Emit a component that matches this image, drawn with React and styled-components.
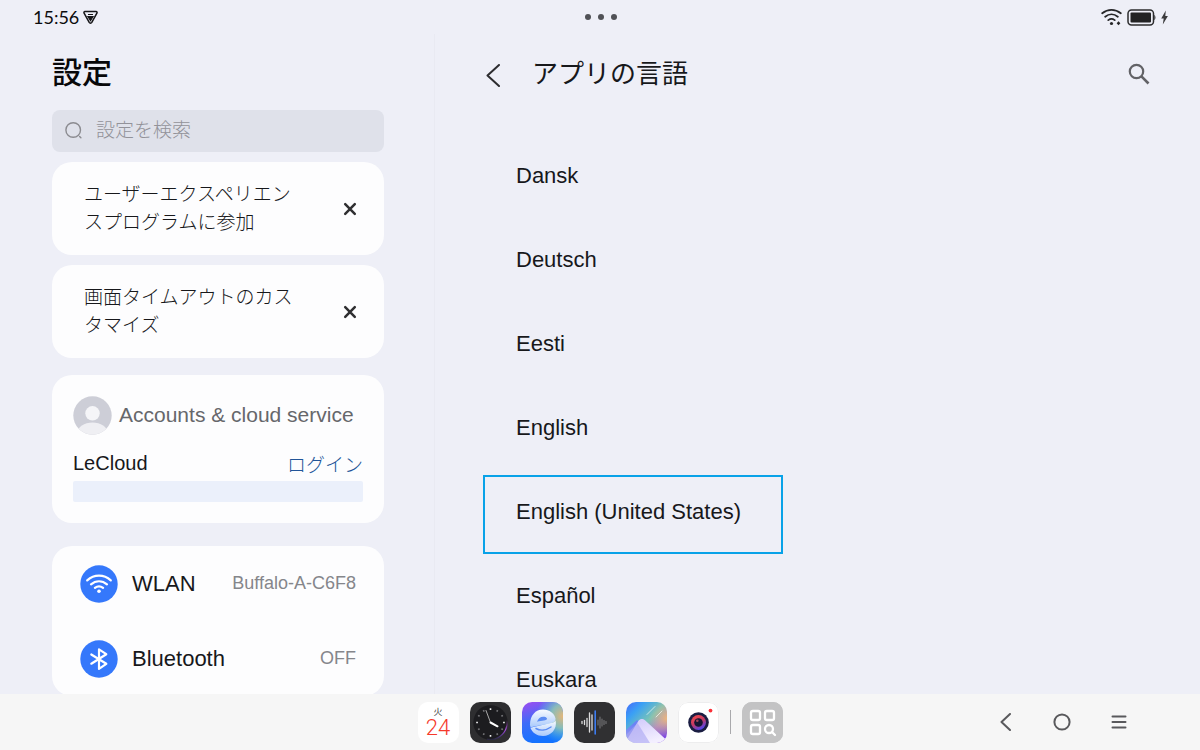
import React from "react";
import styled, { createGlobalStyle } from "styled-components";

const GlobalStyle = createGlobalStyle`
  *, *::before, *::after { box-sizing: border-box; }
  body {
    margin: 0;
    background: #eeeff7;
    color: #17181b;
    font-family: "Liberation Sans", "Noto Sans CJK JP", sans-serif;
  }
  button { font: inherit; color: inherit; background: none; border: 0; padding: 0; cursor: pointer; }
  h1, h2, p, ul { margin: 0; padding: 0; font-weight: 400; }
  ul { list-style: none; }
  svg { display: block; }
`;

const Screen = styled.div`
  display: flex;
  flex-direction: column;
  height: 100vh;
`;

const StatusBar = styled.header`
  flex: none;
  display: grid;
  grid-template-columns: 1fr auto 1fr;
  align-items: center;
  height: 34px;
  padding: 0 32px 0 33px;
`;

const Clock = styled.div`
  display: flex;
  align-items: center;
  gap: 4px;
  font-family: Lato, sans-serif;
  font-size: 18px;
  color: #0c0c0e;
`;

const Indicators = styled.div`
  display: flex;
  justify-content: flex-end;
  align-items: center;
  gap: 5px;
`;

const Panes = styled.main`
  flex: 1;
  min-height: 0;
  display: grid;
  grid-template-columns: 29fr 51fr;
  overflow: hidden;
`;

const Sidebar = styled.section`
  min-height: 0;
  overflow: hidden;
  padding: 14px 50px 0 52px;
  border-right: 1px solid #e9eaf2;
`;

const Title = styled.h1`
  height: 50px;
  font-size: 30px;
  line-height: 50px;
  font-weight: 500;
  color: #08080a;
`;

const SearchBox = styled.label`
  display: flex;
  align-items: center;
  gap: 12px;
  height: 42px;
  margin: 12px 0 10px;
  padding: 0 12px;
  border-radius: 8px;
  background: #dfe1ea;
`;

const SearchInput = styled.input`
  flex: 1;
  min-width: 0;
  border: 0;
  outline: 0;
  padding: 0;
  background: none;
  font: inherit;
  font-size: 19px;
  line-height: 28px;
  font-weight: 300;
  &::placeholder { color: #929299; opacity: 1; }
`;

const Card = styled.div`
  background: #fdfdfe;
  border-radius: 20px;
`;

const TipCard = styled(Card)`
  display: flex;
  align-items: center;
  justify-content: space-between;
  height: 93px;
  margin-bottom: 10px;
  padding: 0 24px 0 32px;
`;

const TipText = styled.p`
  width: 212px;
  font-size: 19px;
  line-height: 28px;
  font-weight: 300;
  line-break: anywhere;
  word-break: break-all;
`;

const IconButton = styled.button`
  display: grid;
  place-items: center;
  width: ${(p) => p.$size || 20}px;
  height: ${(p) => p.$size || 20}px;
`;

const AccountCard = styled(Card)`
  height: 148px;
  margin: 17px 0 23px;
  padding: 20px 21px;
`;

const AccountHead = styled.div`
  display: flex;
  align-items: center;
  gap: 7px;
  height: 40px;
  font-size: 21px;
  color: #66676b;
  white-space: nowrap;
`;

const CloudRow = styled.div`
  display: flex;
  align-items: center;
  justify-content: space-between;
  height: 28px;
  margin: 14px 0 4px;
  font-size: 20px;
`;

const LoginLink = styled.a`
  font-size: 19px;
  font-weight: 300;
  color: #225598;
  text-decoration: none;
`;

const CloudBar = styled.div`
  height: 21px;
  border-radius: 2px;
  background: #ebf0fb;
`;

const NetworkRow = styled.button`
  display: flex;
  align-items: center;
  width: 100%;
  height: 75px;
  padding: 0 28px;
  text-align: left;
`;

const NetworkName = styled.span`
  flex: 1;
  margin-left: 14px;
  font-size: 22px;
`;

const NetworkValue = styled.span`
  font-size: 18px;
  color: #85868b;
`;

const Detail = styled.section`
  min-height: 0;
  overflow: hidden;
  padding: 14px 50px 0 48px;
`;

const DetailHead = styled.div`
  display: flex;
  align-items: center;
  height: 52px;
  margin-bottom: 34px;
`;

const DetailTitle = styled.h2`
  flex: 1;
  margin-left: 29px;
  font-size: 26px;
  line-height: 52px;
`;

const LanguageItem = styled.li`
  height: 84px;
  padding-top: 5px;
`;

const LanguageButton = styled.button`
  width: 300px;
  height: 79px;
  padding: 0 31px 5px;
  border: 2px solid ${(p) => (p.$marked ? "#08a2e8" : "transparent")};
  font-size: 22px;
  text-align: left;
  white-space: nowrap;
`;

const Taskbar = styled.footer`
  flex: none;
  display: grid;
  grid-template-columns: 1fr auto 1fr;
  align-items: center;
  height: 56px;
  background: #f6f6f6;
`;

const Dock = styled.div`
  grid-column: 2;
  display: flex;
  align-items: center;
  gap: 11px;
`;

const AppButton = styled.button`
  width: 41px;
  height: 41px;
  border-radius: 10px;
  overflow: hidden;
  background: ${(p) => p.$bg || "#fff"};
`;

const CalendarButton = styled(AppButton)`
  display: flex;
  flex-direction: column;
  align-items: center;
  justify-content: center;
`;

const Weekday = styled.span`
  font-size: 9px;
  line-height: 12px;
  color: #444;
`;

const DayNumber = styled.span`
  font-family: Roboto, sans-serif;
  font-size: 22px;
  line-height: 20px;
  font-weight: 300;
  color: #f5392b;
`;

const DockDivider = styled.span`
  width: 1px;
  height: 24px;
  background: #a9a9ac;
`;

const NavKeys = styled.nav`
  display: flex;
  justify-content: flex-end;
  gap: 17px;
  padding-right: 61px;
`;

const ShieldIcon = () => (
  <svg width="15" height="15" viewBox="0 0 15 15" fill="none" aria-hidden="true">
    <path d="M2 1.5h11c1 0 1.3.8.9 1.7L8.8 12.4c-.6 1-2 1-2.6 0L1.1 3.2C.7 2.300 1 1.500 2 1.500Z" stroke="#161618" strokeWidth="1.500" />
    <path d="M5 4.500h5M5 6.500h5L7.500 10.500Z" stroke="#161618" strokeWidth="1.200" fill="#161618" />
  </svg>
);

const MoreDots = () => (
  <svg width="34" height="8" viewBox="0 0 34 8" fill="#505156" aria-hidden="true">
    <circle cx="4" cy="4" r="3" />
    <circle cx="17" cy="4" r="3" />
    <circle cx="30" cy="4" r="3" />
  </svg>
);

const SignalIcon = () => (
  <svg width="21" height="18" viewBox="0 0 21 18" fill="none" stroke="#262628" strokeWidth="1.800" strokeLinecap="round" aria-hidden="true">
    <path d="M1.200 5.300C6.800.8 14.200.8 19.800 5.300M4.200 8.700c3.800-3.200 8.800-3.200 12.600 0M7.300 12.100c2-1.500 4.400-1.500 6.400 0" />
    <circle cx="10.500" cy="15.500" r="1.600" fill="#262628" stroke="none" />
    <path d="M17.500 13.200l1.900 2-1.900 2-1.900-2Z" fill="#262628" stroke="none" />
  </svg>
);

const BatteryIcon = () => (
  <svg width="29" height="17" viewBox="0 0 29 17" fill="none" aria-hidden="true">
    <rect x="1" y="1" width="25.500" height="15" rx="3.500" stroke="#2c2c2e" strokeWidth="1.500" />
    <rect x="3.500" y="3.500" width="20.500" height="10" rx="1" fill="#232324" />
    <path d="M27.300 6c1.500.6 1.500 4.400 0 5Z" fill="#2c2c2e" />
  </svg>
);

const BoltIcon = () => (
  <svg width="7" height="15" viewBox="0 0 7 15" aria-hidden="true">
    <path d="M4.800.5.200 8.400h2.500l-.9 6.100L6.900 6H4.300Z" fill="#3a3a3c" />
  </svg>
);

const FieldSearchIcon = () => (
  <svg width="20" height="20" viewBox="0 0 20 20" fill="none" stroke="#8b8b90" strokeWidth="1.400" strokeLinecap="round" aria-hidden="true">
    <circle cx="9.200" cy="9" r="7.300" />
    <path d="m15.600 15.400 1.300 1.300" />
  </svg>
);

const CloseIcon = () => (
  <svg width="14" height="14" viewBox="0 0 14 14" fill="none" stroke="#2f2f31" strokeWidth="2.500" strokeLinecap="round" aria-hidden="true">
    <path d="m2.200 2.200 9.600 9.600M11.800 2.200 2.200 11.800" />
  </svg>
);

const AvatarIcon = () => (
  <svg width="39" height="39" viewBox="0 0 39 39" aria-hidden="true">
    <clipPath id="avatarClip"><circle cx="19.500" cy="19.500" r="19.200" /></clipPath>
    <g clipPath="url(#avatarClip)">
      <rect width="39" height="39" fill="#cdced7" />
      <circle cx="19.500" cy="17.300" r="7.200" fill="#f5f5f8" />
      <ellipse cx="19.500" cy="37" rx="15" ry="10.500" fill="#efeff3" />
    </g>
  </svg>
);

const WlanIcon = () => (
  <svg width="38" height="38" viewBox="0 0 38 38" fill="none" stroke="#fff" strokeWidth="2.200" strokeLinecap="round" aria-hidden="true">
    <circle cx="19" cy="19" r="18.700" fill="#3578fb" stroke="none" />
    <path d="M7.200 15.400c7-6.300 16.600-6.300 23.600 0M11 19.400c4.800-4.200 11.200-4.200 16 0M14.900 22.900c2.500-2 5.700-2 8.200 0" />
    <circle cx="19" cy="26.300" r="1.800" fill="#fff" stroke="none" />
  </svg>
);

const BluetoothIcon = () => (
  <svg width="38" height="38" viewBox="0 0 38 38" fill="none" stroke="#fff" strokeWidth="2.200" strokeLinecap="round" strokeLinejoin="round" aria-hidden="true">
    <circle cx="19" cy="19" r="18.700" fill="#3578fb" stroke="none" />
    <path d="m11.300 14.500 15 9.300-7.300 5V9.400l7.300 4.800-15 9.500" />
  </svg>
);

const BackIcon = ({ height, width, weight, color }) => (
  <svg width={width} height={height} viewBox={`0 0 ${width} ${height}`} fill="none" stroke={color} strokeWidth={weight} strokeLinecap="round" strokeLinejoin="round" aria-hidden="true">
    <path d={`M${width - 1} 1 1.500 ${height / 2}l${width - 2.5} ${height / 2 - 1}`} />
  </svg>
);

const HeaderSearchIcon = () => (
  <svg width="22" height="22" viewBox="0 0 22 22" fill="none" stroke="#626266" strokeWidth="2.200" aria-hidden="true">
    <circle cx="8.500" cy="8.500" r="6.700" />
    <path d="m13.200 13.200 7.300 7.300" strokeWidth="2.600" />
  </svg>
);

const ClockAppIcon = () => (
  <svg width="41" height="41" viewBox="0 0 41 41" fill="none" aria-hidden="true">
    <defs>
      <linearGradient id="clockRing" x1="0.700" y1="0" x2="0.300" y2="1">
        <stop offset="0.200" stopColor="#b64cd0" stopOpacity="0" />
        <stop offset="0.500" stopColor="#a54cd8" />
        <stop offset="1" stopColor="#4d45b5" stopOpacity="0.200" />
      </linearGradient>
    </defs>
    <rect width="41" height="41" fill="#2e2e30" />
    <circle cx="20.500" cy="20.500" r="17.200" fill="#1c1c1f" />
    <path d="M31.500 7.800A17 17 0 0 1 17 37.200" stroke="url(#clockRing)" strokeWidth="1.200" />
    {Array.from({ length: 12 }, (_, i) => (
      <path key={i} d="M20.500 6.200v1.700" transform={`rotate(${i * 30} 20.500 20.500)`} stroke={i % 3 ? "#77777a" : "#eee"} strokeWidth="1.600" />
    ))}
    <path d="M20.500 20.500 16 8.500" stroke="#aaa" strokeWidth="1" strokeLinecap="round" />
    <path d="m20.500 20.500 7 3.800" stroke="#fff" strokeWidth="2" strokeLinecap="round" />
  </svg>
);

const BrowserAppIcon = () => (
  <svg width="41" height="41" viewBox="0 0 41 41" fill="none" aria-hidden="true">
    <defs>
      <linearGradient id="browserBase" x1="0" y1="0" x2="0.300" y2="1">
        <stop offset="0" stopColor="#a04cf0" />
        <stop offset="0.500" stopColor="#3d6cf8" />
        <stop offset="1" stopColor="#1473ff" />
      </linearGradient>
      <radialGradient id="browserGlow" cx="1" cy="0.350" r="0.650">
        <stop offset="0" stopColor="#e7b678" />
        <stop offset="0.450" stopColor="#8fc5b4" stopOpacity="0.900" />
        <stop offset="1" stopColor="#41bde8" stopOpacity="0" />
      </radialGradient>
      <linearGradient id="browserMark" x1="0" y1="0" x2="0" y2="1">
        <stop offset="0" stopColor="#f8fbff" />
        <stop offset="1" stopColor="#a9c9fb" />
      </linearGradient>
    </defs>
    <rect width="41" height="41" fill="url(#browserBase)" />
    <rect width="41" height="41" fill="url(#browserGlow)" />
    <path d="M8 22.500C8 13.500 13.500 7.500 21 7.500c6.500 0 11.500 4 12.500 9 .5 3-3 4.500-7 5.300L8.600 25.300C8.200 24.500 8 23.500 8 22.500Z" fill="url(#browserMark)" />
    <path d="M15 19.800c1.200-3.600 4-5.500 7.200-5 2 .3 3 1.300 2.800 2.300-.2 1.400-4.500 1.600-10 2.700Z" fill="#5b8cf3" />
    <path d="M8.300 25.800 30 20.800c2-.5 3-1.300 3.600-2.600C35.500 27 29 34 21 34c-6 0-10.500-3-12.700-8.200Z" fill="url(#browserMark)" />
    <path d="M14 26.500c4 2.500 10 2 15-1.500" stroke="#5b8cf3" strokeWidth="1.500" strokeLinecap="round" />
  </svg>
);

const recorderBars = [
  [8, 2], [10.500, 4], [13, 8], [15.500, 19], [18, 15],
];
const recorderTail = [
  [24, 5], [26, 11], [28, 7], [30, 4], [32, 2],
];

const RecorderAppIcon = () => (
  <svg width="41" height="41" viewBox="0 0 41 41" strokeLinecap="round" aria-hidden="true">
    <rect width="41" height="41" fill="#303032" />
    {recorderBars.map(([x, h]) => (
      <path key={x} d={`M${x} ${20.5 - h / 2}v${h}`} stroke="#dededf" strokeWidth="1.300" />
    ))}
    <path d="M21.200 9v23" stroke="#3c7cf0" strokeWidth="1.600" />
    {recorderTail.map(([x, h]) => (
      <path key={x} d={`M${x} ${20.5 - h / 2}v${h}`} stroke="#6e6e71" strokeWidth="1.200" />
    ))}
  </svg>
);

const GalleryAppIcon = () => (
  <svg width="41" height="41" viewBox="0 0 41 41" fill="none" aria-hidden="true">
    <defs>
      <linearGradient id="gallerySky" x1="0" y1="0" x2="1" y2="1">
        <stop offset="0" stopColor="#4668fa" />
        <stop offset="0.220" stopColor="#3aa0f5" />
        <stop offset="0.500" stopColor="#7bc5b4" />
        <stop offset="0.680" stopColor="#b184c6" />
        <stop offset="1" stopColor="#6a30ee" />
      </linearGradient>
      <radialGradient id="gallerySun" cx="1" cy="0.400" r="0.450">
        <stop offset="0" stopColor="#eab77c" />
        <stop offset="1" stopColor="#c9b99a" stopOpacity="0" />
      </radialGradient>
      <linearGradient id="galleryBack" x1="0" y1="0" x2="0" y2="1">
        <stop offset="0.200" stopColor="#6a83f5" />
        <stop offset="1" stopColor="#aaa2f0" />
      </linearGradient>
      <linearGradient id="galleryHill" x1="0" y1="0" x2="0.500" y2="1">
        <stop offset="0" stopColor="#cfc7fb" />
        <stop offset="1" stopColor="#f3efff" />
      </linearGradient>
    </defs>
    <rect width="41" height="41" fill="url(#gallerySky)" />
    <rect width="41" height="41" fill="url(#gallerySun)" />
    <path d="M0 28 11 18l13 12v11H0Z" fill="url(#galleryBack)" />
    <path d="m2 41 0-5 10.500-17.300c1.600-2.200 4.500-2.500 6.500-.4L41 38.500V41Z" fill="url(#galleryHill)" />
    <path d="M0 33 11.500 21 24 41H0Z" fill="#a9a5f2" opacity="0.600" />
    <path d="m21 12.500 8-8M30 15l6-6" stroke="#fff" strokeOpacity="0.650" strokeWidth="1" strokeLinecap="round" />
  </svg>
);

const CameraAppIcon = () => (
  <svg width="41" height="41" viewBox="0 0 41 41" fill="none" aria-hidden="true">
    <defs>
      <linearGradient id="cameraLens" x1="0.200" y1="0" x2="0.700" y2="1">
        <stop offset="0" stopColor="#f34b4b" />
        <stop offset="0.500" stopColor="#c43a66" />
        <stop offset="1" stopColor="#4146ff" />
      </linearGradient>
    </defs>
    <rect x="0.500" y="0.500" width="40" height="40" rx="9.500" fill="#fff" stroke="#ededee" />
    <circle cx="20.500" cy="20.500" r="10.300" fill="#1a1d42" />
    <circle cx="20.500" cy="20.500" r="7.500" fill="url(#cameraLens)" />
    <circle cx="20.500" cy="20.500" r="4.300" fill="#151633" />
    <circle cx="19.300" cy="18.800" r="1.300" fill="#a04658" />
    <circle cx="32.500" cy="8.600" r="1.900" fill="#fa3038" />
  </svg>
);

const AllAppsIcon = () => (
  <svg width="41" height="41" viewBox="0 0 41 41" fill="none" stroke="#fff" strokeWidth="2.300" strokeLinecap="round" aria-hidden="true">
    <rect width="41" height="41" fill="#c3c3c4" stroke="none" />
    <rect x="9" y="9" width="9" height="9" rx="1.800" />
    <rect x="23" y="9" width="9" height="9" rx="1.800" />
    <rect x="9" y="23" width="9" height="9" rx="1.800" />
    <circle cx="27" cy="27" r="4" />
    <path d="m30 30 3 3" />
  </svg>
);

const HomeKeyIcon = () => (
  <svg width="18" height="18" viewBox="0 0 18 18" fill="none" stroke="#59595c" strokeWidth="2" aria-hidden="true">
    <circle cx="9" cy="9" r="7.600" />
  </svg>
);

const MenuKeyIcon = () => (
  <svg width="16" height="16" viewBox="0 0 16 16" fill="none" stroke="#59595c" strokeWidth="2" strokeLinecap="round" aria-hidden="true">
    <path d="M1.500 2.500h13M1.500 8h13M1.500 13.500h13" />
  </svg>
);

const tips = [
  "ユーザーエクスペリエンスプログラムに参加",
  "画面タイムアウトのカスタマイズ",
];

const networks = [
  { name: "WLAN", value: "Buffalo-A-C6F8", Icon: WlanIcon },
  { name: "Bluetooth", value: "OFF", Icon: BluetoothIcon },
];

const languages = [
  "Dansk",
  "Deutsch",
  "Eesti",
  "English",
  "English (United States)",
  "Español",
  "Euskara",
];

const dockApps = [
  { name: "時計", Icon: ClockAppIcon },
  { name: "ブラウザ", Icon: BrowserAppIcon },
  { name: "レコーダー", Icon: RecorderAppIcon },
  { name: "ギャラリー", Icon: GalleryAppIcon },
  { name: "カメラ", Icon: CameraAppIcon },
];

export default function App() {
  return (
    <Screen lang="ja">
      <GlobalStyle />
      <StatusBar>
        <Clock>
          15:56
          <ShieldIcon />
        </Clock>
        <MoreDots />
        <Indicators>
          <SignalIcon />
          <BatteryIcon />
          <BoltIcon />
        </Indicators>
      </StatusBar>

      <Panes>
        <Sidebar>
          <Title>設定</Title>
          <SearchBox>
            <FieldSearchIcon />
            <SearchInput type="text" placeholder="設定を検索" aria-label="設定を検索" />
          </SearchBox>

          {tips.map((tip) => (
            <TipCard key={tip}>
              <TipText>{tip}</TipText>
              <IconButton aria-label="閉じる">
                <CloseIcon />
              </IconButton>
            </TipCard>
          ))}

          <AccountCard>
            <AccountHead>
              <AvatarIcon />
              Accounts &amp; cloud service
            </AccountHead>
            <CloudRow>
              LeCloud
              <LoginLink href="#login">ログイン</LoginLink>
            </CloudRow>
            <CloudBar />
          </AccountCard>

          <Card>
            {networks.map(({ name, value, Icon }) => (
              <NetworkRow key={name}>
                <Icon />
                <NetworkName>{name}</NetworkName>
                <NetworkValue>{value}</NetworkValue>
              </NetworkRow>
            ))}
          </Card>
        </Sidebar>

        <Detail>
          <DetailHead>
            <IconButton aria-label="戻る">
              <BackIcon width={14} height={23} weight={2} color="#2c2c2f" />
            </IconButton>
            <DetailTitle>アプリの言語</DetailTitle>
            <IconButton $size={22} aria-label="検索">
              <HeaderSearchIcon />
            </IconButton>
          </DetailHead>
          <ul>
            {languages.map((language) => (
              <LanguageItem key={language}>
                <LanguageButton $marked={language === "English (United States)"}>
                  {language}
                </LanguageButton>
              </LanguageItem>
            ))}
          </ul>
        </Detail>
      </Panes>

      <Taskbar>
        <Dock>
          <CalendarButton aria-label="カレンダー">
            <Weekday>火</Weekday>
            <DayNumber>24</DayNumber>
          </CalendarButton>
          {dockApps.map(({ name, Icon }) => (
            <AppButton key={name} aria-label={name}>
              <Icon />
            </AppButton>
          ))}
          <DockDivider />
          <AppButton $bg="#c3c3c4" aria-label="すべてのアプリ">
            <AllAppsIcon />
          </AppButton>
        </Dock>
        <NavKeys>
          <IconButton $size={40} aria-label="戻る">
            <BackIcon width={11} height={18} weight={2} color="#59595c" />
          </IconButton>
          <IconButton $size={40} aria-label="ホーム">
            <HomeKeyIcon />
          </IconButton>
          <IconButton $size={40} aria-label="メニュー">
            <MenuKeyIcon />
          </IconButton>
        </NavKeys>
      </Taskbar>
    </Screen>
  );
}
